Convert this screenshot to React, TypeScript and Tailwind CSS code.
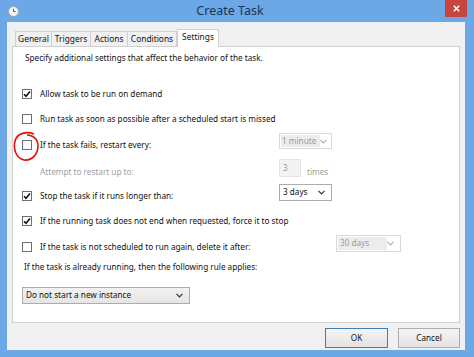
import React from "react";

const font = { fontFamily: '"Noto Sans", "Open Sans", sans-serif' };

function Check({ checked }: { checked?: boolean }) {
  return (
    <div className="w-[10px] h-[10px] border border-[#707070] bg-white flex items-center justify-center shrink-0">
      {checked && (
        <svg width="8" height="8" viewBox="0 0 8 8">
          <path d="M1 4.2 L3 6.2 L7 1.5" fill="none" stroke="#111" strokeWidth="1.6" />
        </svg>
      )}
    </div>
  );
}

function Chevron({ color }: { color: string }) {
  return (
    <svg width="7" height="5" viewBox="0 0 7 5" className="shrink-0">
      <path d="M0.5 0.8 L3.5 3.8 L6.5 0.8" fill="none" stroke={color} strokeWidth="1.2" />
    </svg>
  );
}

export default function App() {
  return (
    <div className="w-[474px] h-[357px] bg-[#6ca8e6] flex flex-col relative overflow-hidden text-[8.2px] text-[#111]" style={font}>
      {/* Title bar */}
      <div className="h-[22px] flex items-center relative shrink-0">
        <div className="ml-[8px] w-[11px] h-[11px] rounded-full bg-[#f4f4f4] border border-[#9aa4ae] flex items-center justify-center">
          <svg width="9" height="9" viewBox="0 0 9 9">
            <path d="M4.5 1.8 L4.5 4.6 L6.6 4.6" fill="none" stroke="#555" strokeWidth="1" />
          </svg>
        </div>
        <div className="flex-1 text-center text-[12.5px] text-[#1f3550] pr-[4px]">Create Task</div>
        <div className="w-[22px] h-[17px] bg-[#c7443f] self-start mr-[7px] flex items-center justify-center">
          <svg width="7" height="7" viewBox="0 0 7 7">
            <path d="M0.8 0.8 L6.2 6.2 M6.2 0.8 L0.8 6.2" stroke="#fff" strokeWidth="1.5" />
          </svg>
        </div>
      </div>

      {/* Client area */}
      <div className="ml-[7px] mr-[9px] mb-[7px] flex-1 bg-[#f0f0f0] flex flex-col px-[5px] pt-[7px]">
        {/* Tabs */}
        <div className="flex items-end h-[17px] pl-[3px] relative z-10 text-[8.4px]">
          {[
            ["General", "w-[37px]"],
            ["Triggers", "w-[40px]"],
            ["Actions", "w-[38px]"],
            ["Conditions", "w-[50px]"],
          ].map(([t, w]) => (
            <div key={t} className={`${w} h-[15px] bg-[#f0f0f0] border border-[#d0d0d0] border-b-0 flex items-center justify-center -mr-[1px]`}>
              {t}
            </div>
          ))}
          <div className="w-[42px] h-[18px] bg-white border border-[#d0d0d0] border-b-0 flex items-center justify-center -mb-[1px] ml-[1px] pb-[2px]">
            Settings
          </div>
        </div>

        {/* Panel */}
        <div className="w-[448px] h-[277px] bg-white border border-[#d0d0d0] flex flex-col pl-[9px] pt-[2px]">
          <div className="h-[18px] flex items-center ml-[3px]">Specify additional settings that affect the behavior of the task.</div>

          <div className="h-[18px] flex items-center mt-[18px]">
            <Check checked />
            <span className="ml-[8px]">Allow task to be run on demand</span>
          </div>

          <div className="h-[18px] flex items-center mt-[7px]">
            <Check />
            <span className="ml-[8px]">Run task as soon as possible after a scheduled start is missed</span>
          </div>

          <div className="h-[18px] flex items-center mt-[8px]">
            <Check />
            <span className="ml-[8px] w-[239px]">If the task fails, restart every:</span>
            <div className="w-[53px] h-[16px] mb-[8px] border border-[#d9d9d9] bg-white flex items-center pl-[1px] pr-[4px]">
              <div className="h-[12px] w-[39px] bg-[#ececec] text-[#9a9a9a] flex items-center pl-[1px] whitespace-nowrap overflow-hidden">1 minute</div>
              <div className="flex-1" />
              <Chevron color="#b0b0b0" />
            </div>
          </div>

          <div className="h-[18px] flex items-center mt-[9px] pl-[18px]">
            <span className="w-[239px] text-[#a0a0a0]">Attempt to restart up to:</span>
            <div className="w-[22px] h-[18px] mb-[8px] border border-[#e4e4e4] bg-[#f3f3f3] text-[#9a9a9a] flex items-center pl-[3px]">3</div>
            <span className="ml-[6px] text-[#a0a0a0]">times</span>
          </div>

          <div className="h-[18px] flex items-center mt-[6px]">
            <Check checked />
            <span className="ml-[8px] w-[239px]">Stop the task if it runs longer than:</span>
            <div className="w-[53px] h-[17px] mb-[8px] border border-[#acacac] bg-white flex items-center pl-[3px] pr-[6px]">
              <span>3 days</span>
              <div className="flex-1" />
              <Chevron color="#333" />
            </div>
          </div>

          <div className="h-[18px] flex items-center mt-[7px]">
            <Check checked />
            <span className="ml-[8px]">If the running task does not end when requested, force it to stop</span>
          </div>

          <div className="h-[18px] flex items-center mt-[8px]">
            <Check />
            <span className="ml-[8px] w-[296px]">If the task is not scheduled to run again, delete it after:</span>
            <div className="w-[65px] h-[17px] mb-[8px] border border-[#d9d9d9] bg-white flex items-center pl-[1px] pr-[6px]">
              <div className="h-[13px] w-[50px] bg-[#ececec] text-[#9a9a9a] flex items-center pl-[2px]">30 days</div>
              <div className="flex-1" />
              <Chevron color="#b0b0b0" />
            </div>
          </div>

          <div className="h-[18px] flex items-center mt-[2px] ml-[2px]">If the task is already running, then the following rule applies:</div>

          <div className="mt-[11px] w-[168px] h-[17px] border border-[#acacac] bg-gradient-to-b from-[#f2f2f2] to-[#e5e5e5] flex items-center pl-[3px] pr-[6px]">
            <span>Do not start a new instance</span>
            <div className="flex-1" />
            <Chevron color="#333" />
          </div>
        </div>

        {/* Buttons */}
        <div className="flex justify-end mt-[5px] gap-[10px]">
          <div className="w-[63px] h-[20px] border border-[#3c7fb1] bg-gradient-to-b from-[#f4f4f4] to-[#e3e3e3] flex items-center justify-center">OK</div>
          <div className="w-[62px] h-[20px] border border-[#acacac] bg-gradient-to-b from-[#f4f4f4] to-[#e3e3e3] flex items-center justify-center">Cancel</div>
        </div>
      </div>

      {/* Red annotation circle */}
      <svg className="absolute left-[12px] top-[131px]" width="30" height="32" viewBox="0 0 30 32">
        <path d="M22 3 C15 0 5 2 3 10 C1 18 4 27 12 29 C20 30 26 23 26 15 C26 8 21 4 15 4" fill="none" stroke="#e01010" strokeWidth="1.6" />
      </svg>
    </div>
  );
}
